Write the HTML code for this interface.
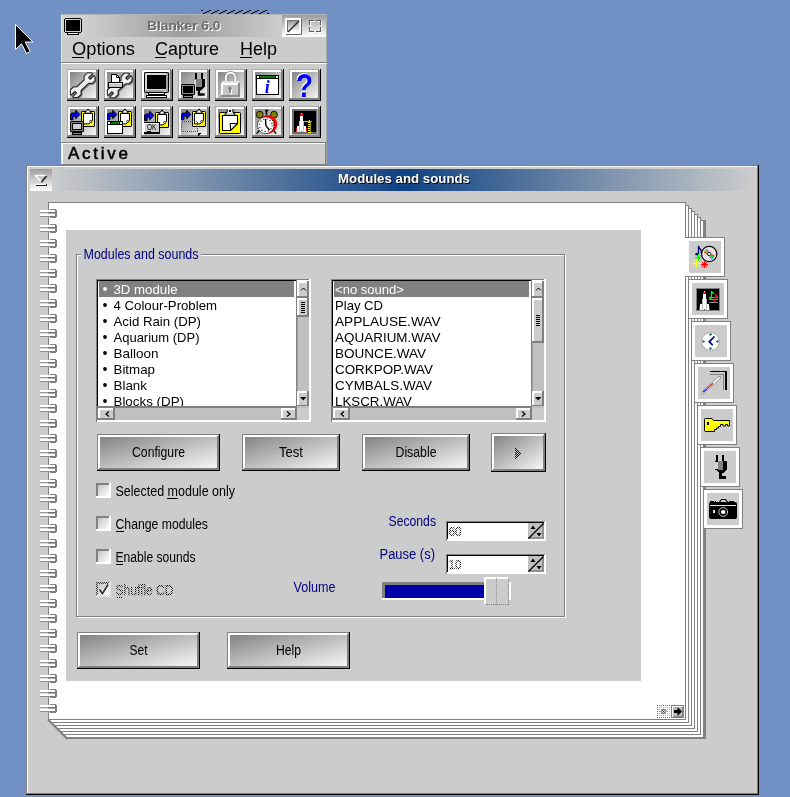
<!DOCTYPE html>
<html lang="en"><head><meta charset="utf-8"><title>Blanker 6.0 - Modules and sounds</title>
<style>
html,body{margin:0;padding:0;background:#7190c3;}
body{width:790px;height:797px;overflow:hidden;position:relative;}
svg{display:block;position:absolute;left:0;top:0;filter:drop-shadow(0 0 0 transparent);font-family:"Liberation Sans",sans-serif;}
text{white-space:pre;}
</style></head><body>
<svg width="790" height="797" viewBox="0 0 790 797" shape-rendering="crispEdges">
<defs>
<linearGradient id="gb" x1="0" y1="0" x2="1" y2="1"><stop offset="0" stop-color="#848484"/><stop offset="0.5" stop-color="#bdbdbd"/><stop offset="1" stop-color="#f6f6f6"/></linearGradient>
<linearGradient id="gt1" x1="0" y1="0" x2="1" y2="0"><stop offset="0" stop-color="#cfcfcf"/><stop offset="0.5" stop-color="#9c9c9c"/><stop offset="1" stop-color="#cdcdcd"/></linearGradient>
<linearGradient id="gt2" x1="0" y1="0" x2="1" y2="0"><stop offset="0" stop-color="#cccccc"/><stop offset="0.5" stop-color="#0e4283"/><stop offset="1" stop-color="#cccccc"/></linearGradient>
<linearGradient id="gv" x1="0" y1="0" x2="0" y2="1"><stop offset="0" stop-color="#9c9c9c"/><stop offset="1" stop-color="#ffffff"/></linearGradient>
<linearGradient id="gring" x1="0" y1="0" x2="0" y2="1"><stop offset="0" stop-color="#8a8a8a"/><stop offset="0.3" stop-color="#ffffff"/><stop offset="0.55" stop-color="#b0b0b0"/><stop offset="0.75" stop-color="#f4f4f4"/><stop offset="1" stop-color="#808080"/></linearGradient>
<pattern id="chk" width="2" height="2" patternUnits="userSpaceOnUse"><rect width="2" height="2" fill="#fff"/><rect width="1" height="1" fill="#999"/><rect x="1" y="1" width="1" height="1" fill="#999"/></pattern>
<pattern id="dith" width="2" height="2" patternUnits="userSpaceOnUse"><rect width="2" height="2" fill="#fff"/><rect width="1" height="1" fill="#aaa"/><rect x="1" y="1" width="1" height="1" fill="#aaa"/></pattern>
<linearGradient id="gclip" x1="0" y1="0" x2="0" y2="1"><stop offset="0" stop-color="#ffffff"/><stop offset="0.6" stop-color="#f0f0f0"/><stop offset="1" stop-color="#909090"/></linearGradient>
<clipPath id="c1"><rect x="98" y="281" width="198" height="125"/></clipPath>
<clipPath id="c2"><rect x="333" y="281" width="198" height="125"/></clipPath>
<pattern id="ht" width="2" height="2" patternUnits="userSpaceOnUse"><rect width="2" height="2" fill="#000"/><rect width="1" height="1" fill="#fff"/><rect x="1" y="1" width="1" height="1" fill="#fff"/></pattern>
<mask id="mht" maskUnits="userSpaceOnUse" x="0" y="0" width="790" height="797"><rect width="790" height="797" fill="url(#ht)"/></mask>
<linearGradient id="gc" x1="0" y1="0" x2="1" y2="1"><stop offset="0" stop-color="#c4c4c4"/><stop offset="1" stop-color="#ffffff"/></linearGradient>
<pattern id="chk2" width="2" height="2" patternUnits="userSpaceOnUse"><rect width="2" height="2" fill="#fff"/><rect x="1" y="1" width="1" height="1" fill="#a8a8a8"/></pattern>
</defs>
<rect x="0" y="0" width="790" height="797" fill="#7190c3"/>
<path d="M15.5,24.5 L15.5,49.5 L21.5,43.8 L26.6,53.5 L30.2,51.6 L25.2,42 L33,42 Z" fill="#000000" stroke="#ffffff" stroke-width="1" shape-rendering="geometricPrecision" stroke-linejoin="miter"/>
<rect x="201" y="10" width="2" height="1" fill="#000000"/>
<rect x="203" y="13" width="2" height="1" fill="#000000"/>
<rect x="205" y="12" width="2" height="1" fill="#000000"/>
<rect x="207" y="11" width="2" height="1" fill="#000000"/>
<rect x="209" y="10" width="2" height="1" fill="#000000"/>
<rect x="211" y="13" width="2" height="1" fill="#000000"/>
<rect x="213" y="12" width="2" height="1" fill="#000000"/>
<rect x="215" y="11" width="2" height="1" fill="#000000"/>
<rect x="217" y="10" width="2" height="1" fill="#000000"/>
<rect x="219" y="13" width="2" height="1" fill="#000000"/>
<rect x="221" y="12" width="2" height="1" fill="#000000"/>
<rect x="223" y="11" width="2" height="1" fill="#000000"/>
<rect x="225" y="10" width="2" height="1" fill="#000000"/>
<rect x="227" y="13" width="2" height="1" fill="#000000"/>
<rect x="229" y="12" width="2" height="1" fill="#000000"/>
<rect x="231" y="11" width="2" height="1" fill="#000000"/>
<rect x="233" y="10" width="2" height="1" fill="#000000"/>
<rect x="235" y="13" width="2" height="1" fill="#000000"/>
<rect x="237" y="12" width="2" height="1" fill="#000000"/>
<rect x="239" y="11" width="2" height="1" fill="#000000"/>
<rect x="241" y="10" width="2" height="1" fill="#000000"/>
<rect x="243" y="13" width="2" height="1" fill="#000000"/>
<rect x="245" y="12" width="2" height="1" fill="#000000"/>
<rect x="247" y="11" width="2" height="1" fill="#000000"/>
<rect x="249" y="10" width="2" height="1" fill="#000000"/>
<rect x="251" y="13" width="2" height="1" fill="#000000"/>
<rect x="253" y="12" width="2" height="1" fill="#000000"/>
<rect x="255" y="11" width="2" height="1" fill="#000000"/>
<rect x="257" y="10" width="2" height="1" fill="#000000"/>
<rect x="259" y="13" width="2" height="1" fill="#000000"/>
<rect x="261" y="12" width="2" height="1" fill="#000000"/>
<rect x="263" y="11" width="2" height="1" fill="#000000"/>
<rect x="265" y="10" width="2" height="1" fill="#000000"/>
<rect x="267" y="13" width="2" height="1" fill="#000000"/>
<rect x="61" y="14" width="266" height="151" fill="#cccccc"/>
<rect x="61" y="14" width="1" height="151" fill="#e8e8e8"/>
<rect x="61" y="14" width="266" height="1" fill="#b4b4b4"/>
<rect x="326" y="14" width="1" height="151" fill="#a8a8a8"/>
<rect x="62" y="15" width="22" height="22" fill="#d2d2d2"/>
<rect x="84" y="15" width="198" height="22" fill="url(#gt1)"/>
<rect x="282" y="15" width="44" height="22" fill="url(#gv)"/>
<text x="148" y="30.6" font-size="13.3" fill="#ffffff" font-weight="700" textLength="73.5" lengthAdjust="spacingAndGlyphs">Blanker 6.0</text>
<text x="147" y="29.6" font-size="13.3" fill="#6c6c6c" font-weight="700" textLength="73.5" lengthAdjust="spacingAndGlyphs">Blanker 6.0</text>
<text x="72" y="55" font-size="18" fill="#000000" textLength="63" lengthAdjust="spacingAndGlyphs">Options</text>
<text x="155" y="55" font-size="18" fill="#000000" textLength="64" lengthAdjust="spacingAndGlyphs">Capture</text>
<text x="240" y="55" font-size="18" fill="#000000" textLength="37" lengthAdjust="spacingAndGlyphs">Help</text>
<rect x="72" y="57" width="12" height="1" fill="#000000"/>
<rect x="155" y="57" width="11" height="1" fill="#000000"/>
<rect x="240" y="57" width="12" height="1" fill="#000000"/>
<rect x="61" y="62" width="266" height="1" fill="#808080"/>
<rect x="61" y="63" width="266" height="1" fill="#ffffff"/>
<rect x="61" y="142" width="266" height="1" fill="#808080"/>
<rect x="61" y="143" width="265" height="1" fill="#ffffff"/>
<rect x="62" y="143" width="1" height="21" fill="#ffffff"/>
<rect x="325" y="143" width="1" height="22" fill="#808080"/>
<rect x="61" y="164" width="266" height="1" fill="#808080"/>
<text x="68" y="158.5" font-size="17" fill="#000000" textLength="60" lengthAdjust="spacing" stroke="#000" stroke-width="0.55">Active</text>
<rect x="67" y="69" width="32" height="32" fill="#000000"/>
<rect x="67" y="69" width="31" height="31" fill="#808080"/>
<rect x="67" y="69" width="29" height="29" fill="#ffffff"/>
<rect x="67" y="69" width="1" height="29" fill="#aaaaaa"/>
<rect x="67" y="69" width="29" height="1" fill="#aaaaaa"/>
<rect x="70" y="72" width="26" height="26" fill="url(#gb)"/>
<path d="M96,70 l2,0 l0,-1 Z" fill="#ffffff"/>
<rect x="104" y="69" width="32" height="32" fill="#000000"/>
<rect x="104" y="69" width="31" height="31" fill="#808080"/>
<rect x="104" y="69" width="29" height="29" fill="#ffffff"/>
<rect x="104" y="69" width="1" height="29" fill="#aaaaaa"/>
<rect x="104" y="69" width="29" height="1" fill="#aaaaaa"/>
<rect x="107" y="72" width="26" height="26" fill="url(#gb)"/>
<path d="M133,70 l2,0 l0,-1 Z" fill="#ffffff"/>
<rect x="141" y="69" width="32" height="32" fill="#000000"/>
<rect x="141" y="69" width="31" height="31" fill="#808080"/>
<rect x="141" y="69" width="29" height="29" fill="#ffffff"/>
<rect x="141" y="69" width="1" height="29" fill="#aaaaaa"/>
<rect x="141" y="69" width="29" height="1" fill="#aaaaaa"/>
<rect x="144" y="72" width="26" height="26" fill="url(#gb)"/>
<path d="M170,70 l2,0 l0,-1 Z" fill="#ffffff"/>
<rect x="178" y="69" width="32" height="32" fill="#000000"/>
<rect x="178" y="69" width="31" height="31" fill="#808080"/>
<rect x="178" y="69" width="29" height="29" fill="#ffffff"/>
<rect x="178" y="69" width="1" height="29" fill="#aaaaaa"/>
<rect x="178" y="69" width="29" height="1" fill="#aaaaaa"/>
<rect x="181" y="72" width="26" height="26" fill="url(#gb)"/>
<path d="M207,70 l2,0 l0,-1 Z" fill="#ffffff"/>
<rect x="215" y="69" width="32" height="32" fill="#000000"/>
<rect x="215" y="69" width="31" height="31" fill="#808080"/>
<rect x="215" y="69" width="29" height="29" fill="#ffffff"/>
<rect x="215" y="69" width="1" height="29" fill="#aaaaaa"/>
<rect x="215" y="69" width="29" height="1" fill="#aaaaaa"/>
<rect x="218" y="72" width="26" height="26" fill="url(#gb)"/>
<path d="M244,70 l2,0 l0,-1 Z" fill="#ffffff"/>
<rect x="252" y="69" width="32" height="32" fill="#000000"/>
<rect x="252" y="69" width="31" height="31" fill="#808080"/>
<rect x="252" y="69" width="29" height="29" fill="#ffffff"/>
<rect x="252" y="69" width="1" height="29" fill="#aaaaaa"/>
<rect x="252" y="69" width="29" height="1" fill="#aaaaaa"/>
<rect x="255" y="72" width="26" height="26" fill="url(#gb)"/>
<path d="M281,70 l2,0 l0,-1 Z" fill="#ffffff"/>
<rect x="289" y="69" width="32" height="32" fill="#000000"/>
<rect x="289" y="69" width="31" height="31" fill="#808080"/>
<rect x="289" y="69" width="29" height="29" fill="#ffffff"/>
<rect x="289" y="69" width="1" height="29" fill="#aaaaaa"/>
<rect x="289" y="69" width="29" height="1" fill="#aaaaaa"/>
<rect x="292" y="72" width="26" height="26" fill="url(#gb)"/>
<path d="M318,70 l2,0 l0,-1 Z" fill="#ffffff"/>
<rect x="67" y="106" width="32" height="32" fill="#000000"/>
<rect x="67" y="106" width="31" height="31" fill="#808080"/>
<rect x="67" y="106" width="29" height="29" fill="#ffffff"/>
<rect x="67" y="106" width="1" height="29" fill="#aaaaaa"/>
<rect x="67" y="106" width="29" height="1" fill="#aaaaaa"/>
<rect x="70" y="109" width="26" height="26" fill="url(#gb)"/>
<path d="M96,107 l2,0 l0,-1 Z" fill="#ffffff"/>
<rect x="104" y="106" width="32" height="32" fill="#000000"/>
<rect x="104" y="106" width="31" height="31" fill="#808080"/>
<rect x="104" y="106" width="29" height="29" fill="#ffffff"/>
<rect x="104" y="106" width="1" height="29" fill="#aaaaaa"/>
<rect x="104" y="106" width="29" height="1" fill="#aaaaaa"/>
<rect x="107" y="109" width="26" height="26" fill="url(#gb)"/>
<path d="M133,107 l2,0 l0,-1 Z" fill="#ffffff"/>
<rect x="141" y="106" width="32" height="32" fill="#000000"/>
<rect x="141" y="106" width="31" height="31" fill="#808080"/>
<rect x="141" y="106" width="29" height="29" fill="#ffffff"/>
<rect x="141" y="106" width="1" height="29" fill="#aaaaaa"/>
<rect x="141" y="106" width="29" height="1" fill="#aaaaaa"/>
<rect x="144" y="109" width="26" height="26" fill="url(#gb)"/>
<path d="M170,107 l2,0 l0,-1 Z" fill="#ffffff"/>
<rect x="178" y="106" width="32" height="32" fill="#000000"/>
<rect x="178" y="106" width="31" height="31" fill="#808080"/>
<rect x="178" y="106" width="29" height="29" fill="#ffffff"/>
<rect x="178" y="106" width="1" height="29" fill="#aaaaaa"/>
<rect x="178" y="106" width="29" height="1" fill="#aaaaaa"/>
<rect x="181" y="109" width="26" height="26" fill="url(#gb)"/>
<path d="M207,107 l2,0 l0,-1 Z" fill="#ffffff"/>
<rect x="215" y="106" width="32" height="32" fill="#000000"/>
<rect x="215" y="106" width="31" height="31" fill="#808080"/>
<rect x="215" y="106" width="29" height="29" fill="#ffffff"/>
<rect x="215" y="106" width="1" height="29" fill="#aaaaaa"/>
<rect x="215" y="106" width="29" height="1" fill="#aaaaaa"/>
<rect x="218" y="109" width="26" height="26" fill="url(#gb)"/>
<path d="M244,107 l2,0 l0,-1 Z" fill="#ffffff"/>
<rect x="252" y="106" width="32" height="32" fill="#000000"/>
<rect x="252" y="106" width="31" height="31" fill="#808080"/>
<rect x="252" y="106" width="29" height="29" fill="#ffffff"/>
<rect x="252" y="106" width="1" height="29" fill="#aaaaaa"/>
<rect x="252" y="106" width="29" height="1" fill="#aaaaaa"/>
<rect x="255" y="109" width="26" height="26" fill="url(#gb)"/>
<path d="M281,107 l2,0 l0,-1 Z" fill="#ffffff"/>
<rect x="289" y="106" width="32" height="32" fill="#000000"/>
<rect x="289" y="106" width="31" height="31" fill="#808080"/>
<rect x="289" y="106" width="29" height="29" fill="#ffffff"/>
<rect x="289" y="106" width="1" height="29" fill="#aaaaaa"/>
<rect x="289" y="106" width="29" height="1" fill="#aaaaaa"/>
<rect x="292" y="109" width="26" height="26" fill="url(#gb)"/>
<path d="M318,107 l2,0 l0,-1 Z" fill="#ffffff"/>
<rect x="26" y="165" width="733" height="630" fill="#cccccc"/>
<rect x="26" y="165" width="1" height="630" fill="#808080"/>
<rect x="26" y="165" width="733" height="1" fill="#808080"/>
<rect x="27" y="166" width="1" height="628" fill="#ffffff"/>
<rect x="27" y="166" width="731" height="1" fill="#ffffff"/>
<rect x="757" y="166" width="1" height="629" fill="#808080"/>
<rect x="27" y="793" width="732" height="1" fill="#808080"/>
<rect x="758" y="165" width="1" height="630" fill="#000000"/>
<rect x="26" y="794" width="733" height="1" fill="#000000"/>
<rect x="30" y="169" width="22" height="22" fill="url(#gv)"/>
<rect x="52" y="169" width="702" height="22" fill="url(#gt2)"/>
<text x="339" y="184" font-size="13" fill="#000000" font-weight="700" textLength="132" lengthAdjust="spacingAndGlyphs">Modules and sounds</text>
<text x="338" y="183" font-size="13" fill="#ffffff" font-weight="700" textLength="132" lengthAdjust="spacingAndGlyphs">Modules and sounds</text>
<rect x="48" y="220" width="658" height="519" fill="#808080"/>
<rect x="49" y="221" width="654" height="516" fill="#ffffff"/>
<rect x="48" y="217" width="653" height="518" fill="#808080"/>
<rect x="49" y="218" width="651" height="516" fill="#ffffff"/>
<rect x="48" y="214" width="650" height="518" fill="#808080"/>
<rect x="49" y="215" width="648" height="516" fill="#ffffff"/>
<rect x="48" y="211" width="647" height="518" fill="#808080"/>
<rect x="49" y="212" width="645" height="516" fill="#ffffff"/>
<rect x="48" y="208" width="644" height="518" fill="#808080"/>
<rect x="49" y="209" width="642" height="516" fill="#ffffff"/>
<rect x="48" y="205" width="641" height="518" fill="#808080"/>
<rect x="49" y="206" width="639" height="516" fill="#ffffff"/>
<rect x="48" y="202" width="638" height="518" fill="#808080"/>
<rect x="49" y="203" width="636" height="516" fill="#ffffff"/>
<path d="M47,720 L47,740 L67,740 Z" fill="#cccccc"/>
<path d="M48,719.5 L67.5,739" fill="none" stroke="#808080" stroke-width="2.2" shape-rendering="geometricPrecision"/>
<rect x="66" y="230" width="575" height="451" fill="#cccccc"/>
<rect x="50" y="209" width="6" height="9" fill="#808080"/>
<rect x="55" y="210" width="2" height="7" fill="#808080"/>
<rect x="40" y="210" width="15" height="2" fill="#ffffff"/>
<rect x="40" y="212" width="8" height="1" fill="#9a9a9a"/>
<rect x="48" y="212" width="7" height="1" fill="#727272"/>
<rect x="40" y="213" width="8" height="1" fill="#dcdcdc"/>
<rect x="48" y="213" width="7" height="1" fill="#a8a8a8"/>
<rect x="40" y="214" width="15" height="2" fill="#ffffff"/>
<rect x="40" y="216" width="10" height="1" fill="#8c8c8c"/>
<rect x="50" y="224" width="6" height="9" fill="#808080"/>
<rect x="55" y="225" width="2" height="7" fill="#808080"/>
<rect x="40" y="225" width="15" height="2" fill="#ffffff"/>
<rect x="40" y="227" width="8" height="1" fill="#9a9a9a"/>
<rect x="48" y="227" width="7" height="1" fill="#727272"/>
<rect x="40" y="228" width="8" height="1" fill="#dcdcdc"/>
<rect x="48" y="228" width="7" height="1" fill="#a8a8a8"/>
<rect x="40" y="229" width="15" height="2" fill="#ffffff"/>
<rect x="40" y="231" width="10" height="1" fill="#8c8c8c"/>
<rect x="50" y="239" width="6" height="9" fill="#808080"/>
<rect x="55" y="240" width="2" height="7" fill="#808080"/>
<rect x="40" y="240" width="15" height="2" fill="#ffffff"/>
<rect x="40" y="242" width="8" height="1" fill="#9a9a9a"/>
<rect x="48" y="242" width="7" height="1" fill="#727272"/>
<rect x="40" y="243" width="8" height="1" fill="#dcdcdc"/>
<rect x="48" y="243" width="7" height="1" fill="#a8a8a8"/>
<rect x="40" y="244" width="15" height="2" fill="#ffffff"/>
<rect x="40" y="246" width="10" height="1" fill="#8c8c8c"/>
<rect x="50" y="254" width="6" height="9" fill="#808080"/>
<rect x="55" y="255" width="2" height="7" fill="#808080"/>
<rect x="40" y="255" width="15" height="2" fill="#ffffff"/>
<rect x="40" y="257" width="8" height="1" fill="#9a9a9a"/>
<rect x="48" y="257" width="7" height="1" fill="#727272"/>
<rect x="40" y="258" width="8" height="1" fill="#dcdcdc"/>
<rect x="48" y="258" width="7" height="1" fill="#a8a8a8"/>
<rect x="40" y="259" width="15" height="2" fill="#ffffff"/>
<rect x="40" y="261" width="10" height="1" fill="#8c8c8c"/>
<rect x="50" y="269" width="6" height="9" fill="#808080"/>
<rect x="55" y="270" width="2" height="7" fill="#808080"/>
<rect x="40" y="270" width="15" height="2" fill="#ffffff"/>
<rect x="40" y="272" width="8" height="1" fill="#9a9a9a"/>
<rect x="48" y="272" width="7" height="1" fill="#727272"/>
<rect x="40" y="273" width="8" height="1" fill="#dcdcdc"/>
<rect x="48" y="273" width="7" height="1" fill="#a8a8a8"/>
<rect x="40" y="274" width="15" height="2" fill="#ffffff"/>
<rect x="40" y="276" width="10" height="1" fill="#8c8c8c"/>
<rect x="50" y="284" width="6" height="9" fill="#808080"/>
<rect x="55" y="285" width="2" height="7" fill="#808080"/>
<rect x="40" y="285" width="15" height="2" fill="#ffffff"/>
<rect x="40" y="287" width="8" height="1" fill="#9a9a9a"/>
<rect x="48" y="287" width="7" height="1" fill="#727272"/>
<rect x="40" y="288" width="8" height="1" fill="#dcdcdc"/>
<rect x="48" y="288" width="7" height="1" fill="#a8a8a8"/>
<rect x="40" y="289" width="15" height="2" fill="#ffffff"/>
<rect x="40" y="291" width="10" height="1" fill="#8c8c8c"/>
<rect x="50" y="299" width="6" height="9" fill="#808080"/>
<rect x="55" y="300" width="2" height="7" fill="#808080"/>
<rect x="40" y="300" width="15" height="2" fill="#ffffff"/>
<rect x="40" y="302" width="8" height="1" fill="#9a9a9a"/>
<rect x="48" y="302" width="7" height="1" fill="#727272"/>
<rect x="40" y="303" width="8" height="1" fill="#dcdcdc"/>
<rect x="48" y="303" width="7" height="1" fill="#a8a8a8"/>
<rect x="40" y="304" width="15" height="2" fill="#ffffff"/>
<rect x="40" y="306" width="10" height="1" fill="#8c8c8c"/>
<rect x="50" y="314" width="6" height="9" fill="#808080"/>
<rect x="55" y="315" width="2" height="7" fill="#808080"/>
<rect x="40" y="315" width="15" height="2" fill="#ffffff"/>
<rect x="40" y="317" width="8" height="1" fill="#9a9a9a"/>
<rect x="48" y="317" width="7" height="1" fill="#727272"/>
<rect x="40" y="318" width="8" height="1" fill="#dcdcdc"/>
<rect x="48" y="318" width="7" height="1" fill="#a8a8a8"/>
<rect x="40" y="319" width="15" height="2" fill="#ffffff"/>
<rect x="40" y="321" width="10" height="1" fill="#8c8c8c"/>
<rect x="50" y="329" width="6" height="9" fill="#808080"/>
<rect x="55" y="330" width="2" height="7" fill="#808080"/>
<rect x="40" y="330" width="15" height="2" fill="#ffffff"/>
<rect x="40" y="332" width="8" height="1" fill="#9a9a9a"/>
<rect x="48" y="332" width="7" height="1" fill="#727272"/>
<rect x="40" y="333" width="8" height="1" fill="#dcdcdc"/>
<rect x="48" y="333" width="7" height="1" fill="#a8a8a8"/>
<rect x="40" y="334" width="15" height="2" fill="#ffffff"/>
<rect x="40" y="336" width="10" height="1" fill="#8c8c8c"/>
<rect x="50" y="344" width="6" height="9" fill="#808080"/>
<rect x="55" y="345" width="2" height="7" fill="#808080"/>
<rect x="40" y="345" width="15" height="2" fill="#ffffff"/>
<rect x="40" y="347" width="8" height="1" fill="#9a9a9a"/>
<rect x="48" y="347" width="7" height="1" fill="#727272"/>
<rect x="40" y="348" width="8" height="1" fill="#dcdcdc"/>
<rect x="48" y="348" width="7" height="1" fill="#a8a8a8"/>
<rect x="40" y="349" width="15" height="2" fill="#ffffff"/>
<rect x="40" y="351" width="10" height="1" fill="#8c8c8c"/>
<rect x="50" y="359" width="6" height="9" fill="#808080"/>
<rect x="55" y="360" width="2" height="7" fill="#808080"/>
<rect x="40" y="360" width="15" height="2" fill="#ffffff"/>
<rect x="40" y="362" width="8" height="1" fill="#9a9a9a"/>
<rect x="48" y="362" width="7" height="1" fill="#727272"/>
<rect x="40" y="363" width="8" height="1" fill="#dcdcdc"/>
<rect x="48" y="363" width="7" height="1" fill="#a8a8a8"/>
<rect x="40" y="364" width="15" height="2" fill="#ffffff"/>
<rect x="40" y="366" width="10" height="1" fill="#8c8c8c"/>
<rect x="50" y="374" width="6" height="9" fill="#808080"/>
<rect x="55" y="375" width="2" height="7" fill="#808080"/>
<rect x="40" y="375" width="15" height="2" fill="#ffffff"/>
<rect x="40" y="377" width="8" height="1" fill="#9a9a9a"/>
<rect x="48" y="377" width="7" height="1" fill="#727272"/>
<rect x="40" y="378" width="8" height="1" fill="#dcdcdc"/>
<rect x="48" y="378" width="7" height="1" fill="#a8a8a8"/>
<rect x="40" y="379" width="15" height="2" fill="#ffffff"/>
<rect x="40" y="381" width="10" height="1" fill="#8c8c8c"/>
<rect x="50" y="389" width="6" height="9" fill="#808080"/>
<rect x="55" y="390" width="2" height="7" fill="#808080"/>
<rect x="40" y="390" width="15" height="2" fill="#ffffff"/>
<rect x="40" y="392" width="8" height="1" fill="#9a9a9a"/>
<rect x="48" y="392" width="7" height="1" fill="#727272"/>
<rect x="40" y="393" width="8" height="1" fill="#dcdcdc"/>
<rect x="48" y="393" width="7" height="1" fill="#a8a8a8"/>
<rect x="40" y="394" width="15" height="2" fill="#ffffff"/>
<rect x="40" y="396" width="10" height="1" fill="#8c8c8c"/>
<rect x="50" y="404" width="6" height="9" fill="#808080"/>
<rect x="55" y="405" width="2" height="7" fill="#808080"/>
<rect x="40" y="405" width="15" height="2" fill="#ffffff"/>
<rect x="40" y="407" width="8" height="1" fill="#9a9a9a"/>
<rect x="48" y="407" width="7" height="1" fill="#727272"/>
<rect x="40" y="408" width="8" height="1" fill="#dcdcdc"/>
<rect x="48" y="408" width="7" height="1" fill="#a8a8a8"/>
<rect x="40" y="409" width="15" height="2" fill="#ffffff"/>
<rect x="40" y="411" width="10" height="1" fill="#8c8c8c"/>
<rect x="50" y="419" width="6" height="9" fill="#808080"/>
<rect x="55" y="420" width="2" height="7" fill="#808080"/>
<rect x="40" y="420" width="15" height="2" fill="#ffffff"/>
<rect x="40" y="422" width="8" height="1" fill="#9a9a9a"/>
<rect x="48" y="422" width="7" height="1" fill="#727272"/>
<rect x="40" y="423" width="8" height="1" fill="#dcdcdc"/>
<rect x="48" y="423" width="7" height="1" fill="#a8a8a8"/>
<rect x="40" y="424" width="15" height="2" fill="#ffffff"/>
<rect x="40" y="426" width="10" height="1" fill="#8c8c8c"/>
<rect x="50" y="434" width="6" height="9" fill="#808080"/>
<rect x="55" y="435" width="2" height="7" fill="#808080"/>
<rect x="40" y="435" width="15" height="2" fill="#ffffff"/>
<rect x="40" y="437" width="8" height="1" fill="#9a9a9a"/>
<rect x="48" y="437" width="7" height="1" fill="#727272"/>
<rect x="40" y="438" width="8" height="1" fill="#dcdcdc"/>
<rect x="48" y="438" width="7" height="1" fill="#a8a8a8"/>
<rect x="40" y="439" width="15" height="2" fill="#ffffff"/>
<rect x="40" y="441" width="10" height="1" fill="#8c8c8c"/>
<rect x="50" y="449" width="6" height="9" fill="#808080"/>
<rect x="55" y="450" width="2" height="7" fill="#808080"/>
<rect x="40" y="450" width="15" height="2" fill="#ffffff"/>
<rect x="40" y="452" width="8" height="1" fill="#9a9a9a"/>
<rect x="48" y="452" width="7" height="1" fill="#727272"/>
<rect x="40" y="453" width="8" height="1" fill="#dcdcdc"/>
<rect x="48" y="453" width="7" height="1" fill="#a8a8a8"/>
<rect x="40" y="454" width="15" height="2" fill="#ffffff"/>
<rect x="40" y="456" width="10" height="1" fill="#8c8c8c"/>
<rect x="50" y="464" width="6" height="9" fill="#808080"/>
<rect x="55" y="465" width="2" height="7" fill="#808080"/>
<rect x="40" y="465" width="15" height="2" fill="#ffffff"/>
<rect x="40" y="467" width="8" height="1" fill="#9a9a9a"/>
<rect x="48" y="467" width="7" height="1" fill="#727272"/>
<rect x="40" y="468" width="8" height="1" fill="#dcdcdc"/>
<rect x="48" y="468" width="7" height="1" fill="#a8a8a8"/>
<rect x="40" y="469" width="15" height="2" fill="#ffffff"/>
<rect x="40" y="471" width="10" height="1" fill="#8c8c8c"/>
<rect x="50" y="479" width="6" height="9" fill="#808080"/>
<rect x="55" y="480" width="2" height="7" fill="#808080"/>
<rect x="40" y="480" width="15" height="2" fill="#ffffff"/>
<rect x="40" y="482" width="8" height="1" fill="#9a9a9a"/>
<rect x="48" y="482" width="7" height="1" fill="#727272"/>
<rect x="40" y="483" width="8" height="1" fill="#dcdcdc"/>
<rect x="48" y="483" width="7" height="1" fill="#a8a8a8"/>
<rect x="40" y="484" width="15" height="2" fill="#ffffff"/>
<rect x="40" y="486" width="10" height="1" fill="#8c8c8c"/>
<rect x="50" y="494" width="6" height="9" fill="#808080"/>
<rect x="55" y="495" width="2" height="7" fill="#808080"/>
<rect x="40" y="495" width="15" height="2" fill="#ffffff"/>
<rect x="40" y="497" width="8" height="1" fill="#9a9a9a"/>
<rect x="48" y="497" width="7" height="1" fill="#727272"/>
<rect x="40" y="498" width="8" height="1" fill="#dcdcdc"/>
<rect x="48" y="498" width="7" height="1" fill="#a8a8a8"/>
<rect x="40" y="499" width="15" height="2" fill="#ffffff"/>
<rect x="40" y="501" width="10" height="1" fill="#8c8c8c"/>
<rect x="50" y="509" width="6" height="9" fill="#808080"/>
<rect x="55" y="510" width="2" height="7" fill="#808080"/>
<rect x="40" y="510" width="15" height="2" fill="#ffffff"/>
<rect x="40" y="512" width="8" height="1" fill="#9a9a9a"/>
<rect x="48" y="512" width="7" height="1" fill="#727272"/>
<rect x="40" y="513" width="8" height="1" fill="#dcdcdc"/>
<rect x="48" y="513" width="7" height="1" fill="#a8a8a8"/>
<rect x="40" y="514" width="15" height="2" fill="#ffffff"/>
<rect x="40" y="516" width="10" height="1" fill="#8c8c8c"/>
<rect x="50" y="524" width="6" height="9" fill="#808080"/>
<rect x="55" y="525" width="2" height="7" fill="#808080"/>
<rect x="40" y="525" width="15" height="2" fill="#ffffff"/>
<rect x="40" y="527" width="8" height="1" fill="#9a9a9a"/>
<rect x="48" y="527" width="7" height="1" fill="#727272"/>
<rect x="40" y="528" width="8" height="1" fill="#dcdcdc"/>
<rect x="48" y="528" width="7" height="1" fill="#a8a8a8"/>
<rect x="40" y="529" width="15" height="2" fill="#ffffff"/>
<rect x="40" y="531" width="10" height="1" fill="#8c8c8c"/>
<rect x="50" y="539" width="6" height="9" fill="#808080"/>
<rect x="55" y="540" width="2" height="7" fill="#808080"/>
<rect x="40" y="540" width="15" height="2" fill="#ffffff"/>
<rect x="40" y="542" width="8" height="1" fill="#9a9a9a"/>
<rect x="48" y="542" width="7" height="1" fill="#727272"/>
<rect x="40" y="543" width="8" height="1" fill="#dcdcdc"/>
<rect x="48" y="543" width="7" height="1" fill="#a8a8a8"/>
<rect x="40" y="544" width="15" height="2" fill="#ffffff"/>
<rect x="40" y="546" width="10" height="1" fill="#8c8c8c"/>
<rect x="50" y="554" width="6" height="9" fill="#808080"/>
<rect x="55" y="555" width="2" height="7" fill="#808080"/>
<rect x="40" y="555" width="15" height="2" fill="#ffffff"/>
<rect x="40" y="557" width="8" height="1" fill="#9a9a9a"/>
<rect x="48" y="557" width="7" height="1" fill="#727272"/>
<rect x="40" y="558" width="8" height="1" fill="#dcdcdc"/>
<rect x="48" y="558" width="7" height="1" fill="#a8a8a8"/>
<rect x="40" y="559" width="15" height="2" fill="#ffffff"/>
<rect x="40" y="561" width="10" height="1" fill="#8c8c8c"/>
<rect x="50" y="569" width="6" height="9" fill="#808080"/>
<rect x="55" y="570" width="2" height="7" fill="#808080"/>
<rect x="40" y="570" width="15" height="2" fill="#ffffff"/>
<rect x="40" y="572" width="8" height="1" fill="#9a9a9a"/>
<rect x="48" y="572" width="7" height="1" fill="#727272"/>
<rect x="40" y="573" width="8" height="1" fill="#dcdcdc"/>
<rect x="48" y="573" width="7" height="1" fill="#a8a8a8"/>
<rect x="40" y="574" width="15" height="2" fill="#ffffff"/>
<rect x="40" y="576" width="10" height="1" fill="#8c8c8c"/>
<rect x="50" y="584" width="6" height="9" fill="#808080"/>
<rect x="55" y="585" width="2" height="7" fill="#808080"/>
<rect x="40" y="585" width="15" height="2" fill="#ffffff"/>
<rect x="40" y="587" width="8" height="1" fill="#9a9a9a"/>
<rect x="48" y="587" width="7" height="1" fill="#727272"/>
<rect x="40" y="588" width="8" height="1" fill="#dcdcdc"/>
<rect x="48" y="588" width="7" height="1" fill="#a8a8a8"/>
<rect x="40" y="589" width="15" height="2" fill="#ffffff"/>
<rect x="40" y="591" width="10" height="1" fill="#8c8c8c"/>
<rect x="50" y="599" width="6" height="9" fill="#808080"/>
<rect x="55" y="600" width="2" height="7" fill="#808080"/>
<rect x="40" y="600" width="15" height="2" fill="#ffffff"/>
<rect x="40" y="602" width="8" height="1" fill="#9a9a9a"/>
<rect x="48" y="602" width="7" height="1" fill="#727272"/>
<rect x="40" y="603" width="8" height="1" fill="#dcdcdc"/>
<rect x="48" y="603" width="7" height="1" fill="#a8a8a8"/>
<rect x="40" y="604" width="15" height="2" fill="#ffffff"/>
<rect x="40" y="606" width="10" height="1" fill="#8c8c8c"/>
<rect x="50" y="614" width="6" height="9" fill="#808080"/>
<rect x="55" y="615" width="2" height="7" fill="#808080"/>
<rect x="40" y="615" width="15" height="2" fill="#ffffff"/>
<rect x="40" y="617" width="8" height="1" fill="#9a9a9a"/>
<rect x="48" y="617" width="7" height="1" fill="#727272"/>
<rect x="40" y="618" width="8" height="1" fill="#dcdcdc"/>
<rect x="48" y="618" width="7" height="1" fill="#a8a8a8"/>
<rect x="40" y="619" width="15" height="2" fill="#ffffff"/>
<rect x="40" y="621" width="10" height="1" fill="#8c8c8c"/>
<rect x="50" y="629" width="6" height="9" fill="#808080"/>
<rect x="55" y="630" width="2" height="7" fill="#808080"/>
<rect x="40" y="630" width="15" height="2" fill="#ffffff"/>
<rect x="40" y="632" width="8" height="1" fill="#9a9a9a"/>
<rect x="48" y="632" width="7" height="1" fill="#727272"/>
<rect x="40" y="633" width="8" height="1" fill="#dcdcdc"/>
<rect x="48" y="633" width="7" height="1" fill="#a8a8a8"/>
<rect x="40" y="634" width="15" height="2" fill="#ffffff"/>
<rect x="40" y="636" width="10" height="1" fill="#8c8c8c"/>
<rect x="50" y="644" width="6" height="9" fill="#808080"/>
<rect x="55" y="645" width="2" height="7" fill="#808080"/>
<rect x="40" y="645" width="15" height="2" fill="#ffffff"/>
<rect x="40" y="647" width="8" height="1" fill="#9a9a9a"/>
<rect x="48" y="647" width="7" height="1" fill="#727272"/>
<rect x="40" y="648" width="8" height="1" fill="#dcdcdc"/>
<rect x="48" y="648" width="7" height="1" fill="#a8a8a8"/>
<rect x="40" y="649" width="15" height="2" fill="#ffffff"/>
<rect x="40" y="651" width="10" height="1" fill="#8c8c8c"/>
<rect x="50" y="659" width="6" height="9" fill="#808080"/>
<rect x="55" y="660" width="2" height="7" fill="#808080"/>
<rect x="40" y="660" width="15" height="2" fill="#ffffff"/>
<rect x="40" y="662" width="8" height="1" fill="#9a9a9a"/>
<rect x="48" y="662" width="7" height="1" fill="#727272"/>
<rect x="40" y="663" width="8" height="1" fill="#dcdcdc"/>
<rect x="48" y="663" width="7" height="1" fill="#a8a8a8"/>
<rect x="40" y="664" width="15" height="2" fill="#ffffff"/>
<rect x="40" y="666" width="10" height="1" fill="#8c8c8c"/>
<rect x="50" y="674" width="6" height="9" fill="#808080"/>
<rect x="55" y="675" width="2" height="7" fill="#808080"/>
<rect x="40" y="675" width="15" height="2" fill="#ffffff"/>
<rect x="40" y="677" width="8" height="1" fill="#9a9a9a"/>
<rect x="48" y="677" width="7" height="1" fill="#727272"/>
<rect x="40" y="678" width="8" height="1" fill="#dcdcdc"/>
<rect x="48" y="678" width="7" height="1" fill="#a8a8a8"/>
<rect x="40" y="679" width="15" height="2" fill="#ffffff"/>
<rect x="40" y="681" width="10" height="1" fill="#8c8c8c"/>
<rect x="50" y="689" width="6" height="9" fill="#808080"/>
<rect x="55" y="690" width="2" height="7" fill="#808080"/>
<rect x="40" y="690" width="15" height="2" fill="#ffffff"/>
<rect x="40" y="692" width="8" height="1" fill="#9a9a9a"/>
<rect x="48" y="692" width="7" height="1" fill="#727272"/>
<rect x="40" y="693" width="8" height="1" fill="#dcdcdc"/>
<rect x="48" y="693" width="7" height="1" fill="#a8a8a8"/>
<rect x="40" y="694" width="15" height="2" fill="#ffffff"/>
<rect x="40" y="696" width="10" height="1" fill="#8c8c8c"/>
<rect x="50" y="704" width="6" height="9" fill="#808080"/>
<rect x="55" y="705" width="2" height="7" fill="#808080"/>
<rect x="40" y="705" width="15" height="2" fill="#ffffff"/>
<rect x="40" y="707" width="8" height="1" fill="#9a9a9a"/>
<rect x="48" y="707" width="7" height="1" fill="#727272"/>
<rect x="40" y="708" width="8" height="1" fill="#dcdcdc"/>
<rect x="48" y="708" width="7" height="1" fill="#a8a8a8"/>
<rect x="40" y="709" width="15" height="2" fill="#ffffff"/>
<rect x="40" y="711" width="10" height="1" fill="#8c8c8c"/>
<rect x="77" y="255" width="489" height="1" fill="#ffffff"/>
<rect x="77" y="255" width="1" height="363" fill="#ffffff"/>
<rect x="77" y="617" width="489" height="1" fill="#ffffff"/>
<rect x="565" y="255" width="1" height="363" fill="#ffffff"/>
<rect x="76" y="254" width="489" height="1" fill="#808080"/>
<rect x="76" y="254" width="1" height="363" fill="#808080"/>
<rect x="76" y="616" width="489" height="1" fill="#808080"/>
<rect x="564" y="254" width="1" height="363" fill="#808080"/>
<rect x="81" y="248" width="120" height="14" fill="#cccccc"/>
<text x="83.5" y="258.5" font-size="14" fill="#000080" textLength="115" lengthAdjust="spacingAndGlyphs">Modules and sounds</text>
<rect x="97" y="434" width="123" height="37" fill="#000000"/>
<rect x="97" y="434" width="122" height="36" fill="#808080"/>
<rect x="98" y="435" width="119" height="33" fill="#ffffff"/>
<rect x="100" y="437" width="117" height="31" fill="url(#gb)"/>
<rect x="98" y="468" width="1" height="1" fill="#ffffff"/>
<rect x="217" y="435" width="1" height="1" fill="#ffffff"/>
<text x="158.5" y="456.5" font-size="14" fill="#000000" textLength="53" lengthAdjust="spacingAndGlyphs" text-anchor="middle">Configure</text>
<rect x="242" y="434" width="98" height="37" fill="#000000"/>
<rect x="242" y="434" width="97" height="36" fill="#808080"/>
<rect x="243" y="435" width="94" height="33" fill="#ffffff"/>
<rect x="245" y="437" width="92" height="31" fill="url(#gb)"/>
<rect x="243" y="468" width="1" height="1" fill="#ffffff"/>
<rect x="337" y="435" width="1" height="1" fill="#ffffff"/>
<text x="291.0" y="456.5" font-size="14" fill="#000000" textLength="24" lengthAdjust="spacingAndGlyphs" text-anchor="middle">Test</text>
<rect x="362" y="434" width="108" height="37" fill="#000000"/>
<rect x="362" y="434" width="107" height="36" fill="#808080"/>
<rect x="363" y="435" width="104" height="33" fill="#ffffff"/>
<rect x="365" y="437" width="102" height="31" fill="url(#gb)"/>
<rect x="363" y="468" width="1" height="1" fill="#ffffff"/>
<rect x="467" y="435" width="1" height="1" fill="#ffffff"/>
<text x="416.0" y="456.5" font-size="14" fill="#000000" textLength="41" lengthAdjust="spacingAndGlyphs" text-anchor="middle">Disable</text>
<rect x="491" y="433" width="55" height="39" fill="#000000"/>
<rect x="491" y="433" width="54" height="38" fill="#808080"/>
<rect x="492" y="434" width="51" height="35" fill="#ffffff"/>
<rect x="494" y="436" width="49" height="33" fill="url(#gb)"/>
<rect x="492" y="469" width="1" height="1" fill="#ffffff"/>
<rect x="543" y="434" width="1" height="1" fill="#ffffff"/>
<rect x="515" y="448" width="1" height="1" fill="#101010"/>
<rect x="516" y="449" width="1" height="1" fill="#101010"/>
<rect x="515" y="450" width="1" height="1" fill="#101010"/>
<rect x="517" y="450" width="1" height="1" fill="#101010"/>
<rect x="516" y="451" width="1" height="1" fill="#101010"/>
<rect x="518" y="451" width="1" height="1" fill="#101010"/>
<rect x="515" y="452" width="1" height="1" fill="#101010"/>
<rect x="517" y="452" width="1" height="1" fill="#101010"/>
<rect x="519" y="452" width="1" height="1" fill="#101010"/>
<rect x="516" y="453" width="1" height="1" fill="#101010"/>
<rect x="518" y="453" width="1" height="1" fill="#101010"/>
<rect x="520" y="453" width="1" height="1" fill="#101010"/>
<rect x="515" y="454" width="1" height="1" fill="#101010"/>
<rect x="517" y="454" width="1" height="1" fill="#101010"/>
<rect x="519" y="454" width="1" height="1" fill="#101010"/>
<rect x="516" y="455" width="1" height="1" fill="#101010"/>
<rect x="518" y="455" width="1" height="1" fill="#101010"/>
<rect x="515" y="456" width="1" height="1" fill="#101010"/>
<rect x="517" y="456" width="1" height="1" fill="#101010"/>
<rect x="516" y="457" width="1" height="1" fill="#101010"/>
<rect x="515" y="458" width="1" height="1" fill="#101010"/>
<rect x="77" y="632" width="123" height="37" fill="#000000"/>
<rect x="77" y="632" width="122" height="36" fill="#808080"/>
<rect x="78" y="633" width="119" height="33" fill="#ffffff"/>
<rect x="80" y="635" width="117" height="31" fill="url(#gb)"/>
<rect x="78" y="666" width="1" height="1" fill="#ffffff"/>
<rect x="197" y="633" width="1" height="1" fill="#ffffff"/>
<text x="138.5" y="654.5" font-size="14" fill="#000000" textLength="18" lengthAdjust="spacingAndGlyphs" text-anchor="middle">Set</text>
<rect x="227" y="632" width="123" height="37" fill="#000000"/>
<rect x="227" y="632" width="122" height="36" fill="#808080"/>
<rect x="228" y="633" width="119" height="33" fill="#ffffff"/>
<rect x="230" y="635" width="117" height="31" fill="url(#gb)"/>
<rect x="228" y="666" width="1" height="1" fill="#ffffff"/>
<rect x="347" y="633" width="1" height="1" fill="#ffffff"/>
<text x="288.5" y="654.5" font-size="14" fill="#000000" textLength="25" lengthAdjust="spacingAndGlyphs" text-anchor="middle">Help</text>
<rect x="96" y="279" width="215" height="143" fill="#ffffff"/>
<rect x="96" y="279" width="1" height="143" fill="#808080"/>
<rect x="96" y="279" width="213" height="1" fill="#808080"/>
<rect x="97" y="280" width="1" height="126" fill="#000000"/>
<rect x="97" y="280" width="199" height="1" fill="#000000"/>
<rect x="97" y="406" width="1" height="14" fill="#808080"/>
<rect x="296" y="281" width="13" height="126" fill="#c0c0c0"/>
<rect x="296" y="280" width="1" height="128" fill="#808080"/>
<rect x="297" y="317" width="1" height="75" fill="#a0a0a0"/>
<rect x="297" y="281" width="12" height="17" fill="#808080"/>
<rect x="297" y="281" width="10" height="15" fill="#ffffff"/>
<rect x="299" y="283" width="8" height="13" fill="#cccccc"/>
<path d="M301,290.5 l2.5,-2.5 l2.5,2.5" fill="none" stroke="#000000" stroke-width="1" shape-rendering="geometricPrecision"/>
<rect x="297" y="298" width="12" height="19" fill="#808080"/>
<rect x="297" y="298" width="10" height="17" fill="#ffffff"/>
<rect x="299" y="300" width="8" height="15" fill="#cccccc"/>
<rect x="301" y="302" width="4" height="1" fill="#000000"/>
<rect x="301" y="304" width="4" height="1" fill="#000000"/>
<rect x="301" y="306" width="4" height="1" fill="#000000"/>
<rect x="301" y="308" width="4" height="1" fill="#000000"/>
<rect x="301" y="310" width="4" height="1" fill="#000000"/>
<rect x="301" y="312" width="4" height="1" fill="#000000"/>
<rect x="297" y="391" width="12" height="16" fill="#808080"/>
<rect x="297" y="391" width="10" height="14" fill="#ffffff"/>
<rect x="299" y="393" width="8" height="12" fill="#cccccc"/>
<path d="M300,397 l6.4,0 l-3.2,3.6 Z" fill="#000000" shape-rendering="geometricPrecision"/>
<rect x="98" y="406" width="211" height="14" fill="#c0c0c0"/>
<rect x="97" y="406" width="200" height="1" fill="#808080"/>
<rect x="97" y="407" width="200" height="1" fill="#808080"/>
<rect x="98" y="408" width="17" height="12" fill="#808080"/>
<rect x="98" y="408" width="15" height="10" fill="#ffffff"/>
<rect x="100" y="410" width="13" height="8" fill="#cccccc"/>
<path d="M109,411.5 l-3,2.5 l3,2.5" fill="none" stroke="#000000" stroke-width="1.2" shape-rendering="geometricPrecision"/>
<rect x="281" y="408" width="16" height="12" fill="#808080"/>
<rect x="281" y="408" width="14" height="10" fill="#ffffff"/>
<rect x="283" y="410" width="12" height="8" fill="#cccccc"/>
<path d="M287,411.5 l3,2.5 l-3,2.5" fill="none" stroke="#000000" stroke-width="1.2" shape-rendering="geometricPrecision"/>
<rect x="297" y="408" width="12" height="12" fill="#cccccc"/>
<rect x="309" y="280" width="2" height="142" fill="#ffffff"/>
<rect x="97" y="420" width="214" height="2" fill="#ffffff"/>
<rect x="99" y="281" width="195" height="16" fill="#808080"/>
<g clip-path="url(#c1)">
<circle cx="105" cy="289" r="1.9" fill="#ffffff" shape-rendering="geometricPrecision"/>
<text x="113.5" y="294" font-size="13.5" fill="#ffffff" textLength="64" lengthAdjust="spacingAndGlyphs">3D module</text>
<circle cx="105" cy="305" r="1.9" fill="#000000" shape-rendering="geometricPrecision"/>
<text x="113.5" y="310" font-size="13.5" fill="#000000" textLength="103.5" lengthAdjust="spacingAndGlyphs">4 Colour-Problem</text>
<circle cx="105" cy="321" r="1.9" fill="#000000" shape-rendering="geometricPrecision"/>
<text x="113.5" y="326" font-size="13.5" fill="#000000" textLength="87.5" lengthAdjust="spacingAndGlyphs">Acid Rain (DP)</text>
<circle cx="105" cy="337" r="1.9" fill="#000000" shape-rendering="geometricPrecision"/>
<text x="113.5" y="342" font-size="13.5" fill="#000000" textLength="86" lengthAdjust="spacingAndGlyphs">Aquarium (DP)</text>
<circle cx="105" cy="353" r="1.9" fill="#000000" shape-rendering="geometricPrecision"/>
<text x="113.5" y="358" font-size="13.5" fill="#000000" textLength="45" lengthAdjust="spacingAndGlyphs">Balloon</text>
<circle cx="105" cy="369" r="1.9" fill="#000000" shape-rendering="geometricPrecision"/>
<text x="113.5" y="374" font-size="13.5" fill="#000000" textLength="41.5" lengthAdjust="spacingAndGlyphs">Bitmap</text>
<circle cx="105" cy="385" r="1.9" fill="#000000" shape-rendering="geometricPrecision"/>
<text x="113.5" y="390" font-size="13.5" fill="#000000" textLength="33.5" lengthAdjust="spacingAndGlyphs">Blank</text>
<circle cx="105" cy="401" r="1.9" fill="#000000" shape-rendering="geometricPrecision"/>
<text x="113.5" y="406" font-size="13.5" fill="#000000" textLength="70.5" lengthAdjust="spacingAndGlyphs">Blocks (DP)</text>
</g>
<rect x="331" y="279" width="215" height="143" fill="#ffffff"/>
<rect x="331" y="279" width="1" height="143" fill="#808080"/>
<rect x="331" y="279" width="213" height="1" fill="#808080"/>
<rect x="332" y="280" width="1" height="126" fill="#000000"/>
<rect x="332" y="280" width="199" height="1" fill="#000000"/>
<rect x="332" y="406" width="1" height="14" fill="#808080"/>
<rect x="531" y="281" width="13" height="126" fill="#c0c0c0"/>
<rect x="531" y="280" width="1" height="128" fill="#808080"/>
<rect x="532" y="317" width="1" height="75" fill="#a0a0a0"/>
<rect x="532" y="281" width="12" height="17" fill="#808080"/>
<rect x="532" y="281" width="10" height="15" fill="#ffffff"/>
<rect x="534" y="283" width="8" height="13" fill="#cccccc"/>
<path d="M536,290.5 l2.5,-2.5 l2.5,2.5" fill="none" stroke="#000000" stroke-width="1" shape-rendering="geometricPrecision"/>
<rect x="532" y="298" width="12" height="45" fill="#808080"/>
<rect x="532" y="298" width="10" height="43" fill="#ffffff"/>
<rect x="534" y="300" width="8" height="41" fill="#cccccc"/>
<rect x="536" y="315" width="4" height="1" fill="#000000"/>
<rect x="536" y="317" width="4" height="1" fill="#000000"/>
<rect x="536" y="319" width="4" height="1" fill="#000000"/>
<rect x="536" y="321" width="4" height="1" fill="#000000"/>
<rect x="536" y="323" width="4" height="1" fill="#000000"/>
<rect x="536" y="325" width="4" height="1" fill="#000000"/>
<rect x="532" y="391" width="12" height="16" fill="#808080"/>
<rect x="532" y="391" width="10" height="14" fill="#ffffff"/>
<rect x="534" y="393" width="8" height="12" fill="#cccccc"/>
<path d="M535,397 l6.4,0 l-3.2,3.6 Z" fill="#000000" shape-rendering="geometricPrecision"/>
<rect x="333" y="406" width="211" height="14" fill="#c0c0c0"/>
<rect x="332" y="406" width="200" height="1" fill="#808080"/>
<rect x="332" y="407" width="200" height="1" fill="#808080"/>
<rect x="333" y="408" width="17" height="12" fill="#808080"/>
<rect x="333" y="408" width="15" height="10" fill="#ffffff"/>
<rect x="335" y="410" width="13" height="8" fill="#cccccc"/>
<path d="M344,411.5 l-3,2.5 l3,2.5" fill="none" stroke="#000000" stroke-width="1.2" shape-rendering="geometricPrecision"/>
<rect x="516" y="408" width="16" height="12" fill="#808080"/>
<rect x="516" y="408" width="14" height="10" fill="#ffffff"/>
<rect x="518" y="410" width="12" height="8" fill="#cccccc"/>
<path d="M522,411.5 l3,2.5 l-3,2.5" fill="none" stroke="#000000" stroke-width="1.2" shape-rendering="geometricPrecision"/>
<rect x="532" y="408" width="12" height="12" fill="#cccccc"/>
<rect x="544" y="280" width="2" height="142" fill="#ffffff"/>
<rect x="332" y="420" width="214" height="2" fill="#ffffff"/>
<rect x="334" y="281" width="195" height="16" fill="#808080"/>
<g clip-path="url(#c2)">
<text x="335" y="294" font-size="13.5" fill="#ffffff" textLength="69" lengthAdjust="spacingAndGlyphs">&lt;no sound&gt;</text>
<text x="335" y="310" font-size="13.5" fill="#000000" textLength="48" lengthAdjust="spacingAndGlyphs">Play CD</text>
<text x="335" y="326" font-size="13.5" fill="#000000" textLength="105.5" lengthAdjust="spacingAndGlyphs">APPLAUSE.WAV</text>
<text x="335" y="342" font-size="13.5" fill="#000000" textLength="105.5" lengthAdjust="spacingAndGlyphs">AQUARIUM.WAV</text>
<text x="335" y="358" font-size="13.5" fill="#000000" textLength="91" lengthAdjust="spacingAndGlyphs">BOUNCE.WAV</text>
<text x="335" y="374" font-size="13.5" fill="#000000" textLength="98" lengthAdjust="spacingAndGlyphs">CORKPOP.WAV</text>
<text x="335" y="390" font-size="13.5" fill="#000000" textLength="97" lengthAdjust="spacingAndGlyphs">CYMBALS.WAV</text>
<text x="335" y="406" font-size="13.5" fill="#000000" textLength="77" lengthAdjust="spacingAndGlyphs">LKSCR.WAV</text>
</g>
<rect x="96" y="483" width="15" height="15" fill="#ffffff"/>
<rect x="96" y="483" width="13" height="13" fill="#808080"/>
<rect x="98" y="485" width="11" height="11" fill="url(#gc)"/>
<text x="115.5" y="495.6" font-size="14" fill="#000000" textLength="119.5" lengthAdjust="spacingAndGlyphs">Selected module only</text>
<rect x="167" y="498" width="11" height="1" fill="#000000"/>
<rect x="96" y="516" width="15" height="15" fill="#ffffff"/>
<rect x="96" y="516" width="13" height="13" fill="#808080"/>
<rect x="98" y="518" width="11" height="11" fill="url(#gc)"/>
<text x="115.5" y="528.6" font-size="14" fill="#000000" textLength="92.5" lengthAdjust="spacingAndGlyphs">Change modules</text>
<rect x="116" y="531" width="8" height="1" fill="#000000"/>
<rect x="96" y="549" width="15" height="15" fill="#ffffff"/>
<rect x="96" y="549" width="13" height="13" fill="#808080"/>
<rect x="98" y="551" width="11" height="11" fill="url(#gc)"/>
<text x="115.5" y="561.6" font-size="14" fill="#000000" textLength="80" lengthAdjust="spacingAndGlyphs">Enable sounds</text>
<rect x="116" y="564" width="7" height="1" fill="#000000"/>
<g mask="url(#mht)">
<rect x="96" y="582" width="15" height="15" fill="#ffffff"/>
<rect x="96" y="582" width="13" height="13" fill="#404040"/>
</g>
<rect x="98" y="584" width="11" height="11" fill="url(#gc)"/>
<path d="M99.5,589.5 l3,4 l5.5,-9" fill="none" stroke="#303030" stroke-width="1.6" shape-rendering="geometricPrecision"/>
<g mask="url(#mht)">
<text x="115.5" y="594.6" font-size="14" fill="#000000" textLength="58" lengthAdjust="spacingAndGlyphs" stroke="#000" stroke-width="0.25">Shuffle CD</text>
<rect x="116" y="597" width="7" height="1" fill="#000000"/>
</g>
<text x="388.5" y="526" font-size="14" fill="#000080" textLength="47.5" lengthAdjust="spacingAndGlyphs">Seconds</text>
<text x="379.5" y="559" font-size="14" fill="#000080" textLength="55.5" lengthAdjust="spacingAndGlyphs">Pause (s)</text>
<text x="293.5" y="592" font-size="14" fill="#000080" textLength="42" lengthAdjust="spacingAndGlyphs">Volume</text>
<rect x="446" y="521" width="100" height="20" fill="#ffffff"/>
<rect x="446" y="521" width="99" height="1" fill="#808080"/>
<rect x="446" y="521" width="1" height="20" fill="#808080"/>
<rect x="447" y="522" width="97" height="1" fill="#000000"/>
<rect x="447" y="522" width="1" height="17" fill="#000000"/>
<rect x="528" y="523" width="16" height="16" fill="#c0c0c0"/>
<rect x="542" y="523" width="2" height="16" fill="#909090"/>
<rect x="528" y="537" width="16" height="2" fill="#909090"/>
<path d="M528.5,538.5 L543.5,523.5" fill="none" stroke="#000000" stroke-width="1.2" shape-rendering="geometricPrecision"/>
<path d="M530.5,529 l5,0 l-2.5,-3.5 Z" fill="#000000" shape-rendering="geometricPrecision"/>
<path d="M536.5,533 l5,0 l-2.5,3.5 Z" fill="#000000" shape-rendering="geometricPrecision"/>
<g mask="url(#mht)">
<text x="448.5" y="535.5" font-size="13" fill="#000000" textLength="13" lengthAdjust="spacingAndGlyphs" stroke="#000" stroke-width="0.5">60</text>
</g>
<rect x="446" y="554" width="100" height="20" fill="#ffffff"/>
<rect x="446" y="554" width="99" height="1" fill="#808080"/>
<rect x="446" y="554" width="1" height="20" fill="#808080"/>
<rect x="447" y="555" width="97" height="1" fill="#000000"/>
<rect x="447" y="555" width="1" height="17" fill="#000000"/>
<rect x="528" y="556" width="16" height="16" fill="#c0c0c0"/>
<rect x="542" y="556" width="2" height="16" fill="#909090"/>
<rect x="528" y="570" width="16" height="2" fill="#909090"/>
<path d="M528.5,571.5 L543.5,556.5" fill="none" stroke="#000000" stroke-width="1.2" shape-rendering="geometricPrecision"/>
<path d="M530.5,562 l5,0 l-2.5,-3.5 Z" fill="#000000" shape-rendering="geometricPrecision"/>
<path d="M536.5,566 l5,0 l-2.5,3.5 Z" fill="#000000" shape-rendering="geometricPrecision"/>
<g mask="url(#mht)">
<text x="448.5" y="568.5" font-size="13" fill="#000000" textLength="13" lengthAdjust="spacingAndGlyphs" stroke="#000" stroke-width="0.5">10</text>
</g>
<rect x="382" y="582" width="129" height="18" fill="#ffffff"/>
<rect x="382" y="582" width="127" height="16" fill="#808080"/>
<rect x="385" y="585" width="124" height="13" fill="#0000aa"/>
<rect x="484" y="577" width="25" height="28" fill="#cccccc"/>
<rect x="484" y="577" width="25" height="2" fill="#ffffff"/>
<rect x="484" y="577" width="2" height="28" fill="#ffffff"/>
<rect x="508" y="578" width="1" height="1" fill="#808080"/>
<rect x="496" y="578" width="1" height="1" fill="#909090"/>
<rect x="508" y="580" width="1" height="1" fill="#808080"/>
<rect x="496" y="580" width="1" height="1" fill="#909090"/>
<rect x="508" y="582" width="1" height="1" fill="#808080"/>
<rect x="496" y="582" width="1" height="1" fill="#909090"/>
<rect x="508" y="584" width="1" height="1" fill="#808080"/>
<rect x="496" y="584" width="1" height="1" fill="#909090"/>
<rect x="508" y="586" width="1" height="1" fill="#808080"/>
<rect x="496" y="586" width="1" height="1" fill="#909090"/>
<rect x="508" y="588" width="1" height="1" fill="#808080"/>
<rect x="496" y="588" width="1" height="1" fill="#909090"/>
<rect x="508" y="590" width="1" height="1" fill="#808080"/>
<rect x="496" y="590" width="1" height="1" fill="#909090"/>
<rect x="508" y="592" width="1" height="1" fill="#808080"/>
<rect x="496" y="592" width="1" height="1" fill="#909090"/>
<rect x="508" y="594" width="1" height="1" fill="#808080"/>
<rect x="496" y="594" width="1" height="1" fill="#909090"/>
<rect x="508" y="596" width="1" height="1" fill="#808080"/>
<rect x="496" y="596" width="1" height="1" fill="#909090"/>
<rect x="508" y="598" width="1" height="1" fill="#808080"/>
<rect x="496" y="598" width="1" height="1" fill="#909090"/>
<rect x="508" y="600" width="1" height="1" fill="#808080"/>
<rect x="496" y="600" width="1" height="1" fill="#909090"/>
<rect x="508" y="602" width="1" height="1" fill="#808080"/>
<rect x="496" y="602" width="1" height="1" fill="#909090"/>
<rect x="508" y="604" width="1" height="1" fill="#808080"/>
<rect x="496" y="604" width="1" height="1" fill="#909090"/>
<rect x="485" y="604" width="1" height="1" fill="#808080"/>
<rect x="487" y="604" width="1" height="1" fill="#808080"/>
<rect x="489" y="604" width="1" height="1" fill="#808080"/>
<rect x="491" y="604" width="1" height="1" fill="#808080"/>
<rect x="493" y="604" width="1" height="1" fill="#808080"/>
<rect x="495" y="604" width="1" height="1" fill="#808080"/>
<rect x="497" y="604" width="1" height="1" fill="#808080"/>
<rect x="499" y="604" width="1" height="1" fill="#808080"/>
<rect x="501" y="604" width="1" height="1" fill="#808080"/>
<rect x="503" y="604" width="1" height="1" fill="#808080"/>
<rect x="505" y="604" width="1" height="1" fill="#808080"/>
<rect x="507" y="604" width="1" height="1" fill="#808080"/>
<rect x="509" y="582" width="2" height="18" fill="#ffffff"/>
<rect x="657" y="705" width="13" height="13" fill="url(#chk2)"/>
<rect x="657" y="705" width="1" height="1" fill="#707070"/>
<rect x="657" y="705" width="1" height="1" fill="#707070"/>
<rect x="657" y="717" width="1" height="1" fill="#707070"/>
<rect x="657" y="707" width="1" height="1" fill="#707070"/>
<rect x="659" y="705" width="1" height="1" fill="#707070"/>
<rect x="659" y="717" width="1" height="1" fill="#707070"/>
<rect x="657" y="709" width="1" height="1" fill="#707070"/>
<rect x="661" y="705" width="1" height="1" fill="#707070"/>
<rect x="661" y="717" width="1" height="1" fill="#707070"/>
<rect x="657" y="711" width="1" height="1" fill="#707070"/>
<rect x="663" y="705" width="1" height="1" fill="#707070"/>
<rect x="663" y="717" width="1" height="1" fill="#707070"/>
<rect x="657" y="713" width="1" height="1" fill="#707070"/>
<rect x="665" y="705" width="1" height="1" fill="#707070"/>
<rect x="665" y="717" width="1" height="1" fill="#707070"/>
<rect x="657" y="715" width="1" height="1" fill="#707070"/>
<rect x="667" y="705" width="1" height="1" fill="#707070"/>
<rect x="667" y="717" width="1" height="1" fill="#707070"/>
<rect x="657" y="717" width="1" height="1" fill="#707070"/>
<rect x="669" y="705" width="1" height="1" fill="#707070"/>
<rect x="669" y="717" width="1" height="1" fill="#707070"/>
<path d="M663.5,709 l2.5,2.5 l-2.5,2.5 l-2.5,-2.5 Z" fill="#e8e8e8" stroke="#222" stroke-width="1" shape-rendering="geometricPrecision"/>
<rect x="663" y="711" width="1" height="1" fill="#222"/>
<rect x="671" y="705" width="13" height="13" fill="#808080"/>
<rect x="672" y="706" width="11" height="11" fill="#ffffff"/>
<rect x="673" y="707" width="10" height="10" fill="#888888"/>
<rect x="673" y="707" width="9" height="9" fill="#bcbcbc"/>
<path d="M674,710 l3.5,0 l0,-3 l4.5,4.5 l-4.5,4.5 l0,-3 l-3.5,0 Z" fill="#000000" shape-rendering="geometricPrecision"/>
<rect x="685" y="237" width="40" height="40" fill="#808080"/>
<rect x="686" y="238" width="38" height="38" fill="#ffffff"/>
<rect x="689" y="241" width="32" height="32" fill="#cccccc"/>
<rect x="685" y="238" width="1" height="38" fill="#ffffff"/>
<rect x="688" y="279" width="40" height="40" fill="#808080"/>
<rect x="689" y="280" width="38" height="38" fill="#ffffff"/>
<rect x="692" y="283" width="32" height="32" fill="#cccccc"/>
<rect x="691" y="321" width="40" height="40" fill="#808080"/>
<rect x="692" y="322" width="38" height="38" fill="#ffffff"/>
<rect x="695" y="325" width="32" height="32" fill="#cccccc"/>
<rect x="694" y="363" width="40" height="40" fill="#808080"/>
<rect x="695" y="364" width="38" height="38" fill="#ffffff"/>
<rect x="698" y="367" width="32" height="32" fill="#cccccc"/>
<rect x="697" y="405" width="40" height="40" fill="#808080"/>
<rect x="698" y="406" width="38" height="38" fill="#ffffff"/>
<rect x="701" y="409" width="32" height="32" fill="#cccccc"/>
<rect x="700" y="447" width="40" height="40" fill="#808080"/>
<rect x="701" y="448" width="38" height="38" fill="#ffffff"/>
<rect x="704" y="451" width="32" height="32" fill="#cccccc"/>
<rect x="703" y="489" width="40" height="40" fill="#808080"/>
<rect x="704" y="490" width="38" height="38" fill="#ffffff"/>
<rect x="707" y="493" width="32" height="32" fill="#cccccc"/>
<rect x="65" y="18" width="16" height="15" fill="#000000"/>
<rect x="64" y="19" width="18" height="13" fill="#000000"/>
<rect x="65" y="19" width="16" height="13" fill="#d0d0d0"/>
<rect x="66" y="20" width="14" height="11" fill="#000000"/>
<rect x="67" y="33" width="12" height="2" fill="#000000"/>
<rect x="68" y="33" width="10" height="1" fill="#ffffff"/>
<rect x="286" y="19" width="16" height="16" fill="#6a6a6a"/>
<rect x="285" y="18" width="16" height="16" fill="#ffffff"/>
<rect x="287" y="20" width="12" height="12" fill="#707070"/>
<rect x="288" y="21" width="11" height="11" fill="url(#gv)"/>
<path d="M288,32 L299,21" fill="none" stroke="#2a2a2a" stroke-width="1.5" shape-rendering="geometricPrecision"/>
<rect x="310" y="21" width="5" height="1" fill="#ffffff"/>
<rect x="310" y="21" width="1" height="5" fill="#ffffff"/>
<rect x="309" y="20" width="5" height="1" fill="#5a5a5a"/>
<rect x="309" y="20" width="1" height="5" fill="#5a5a5a"/>
<rect x="317" y="21" width="5" height="1" fill="#ffffff"/>
<rect x="321" y="21" width="1" height="5" fill="#ffffff"/>
<rect x="316" y="20" width="5" height="1" fill="#5a5a5a"/>
<rect x="320" y="20" width="1" height="5" fill="#5a5a5a"/>
<rect x="310" y="32" width="5" height="1" fill="#ffffff"/>
<rect x="310" y="28" width="1" height="5" fill="#ffffff"/>
<rect x="309" y="31" width="5" height="1" fill="#5a5a5a"/>
<rect x="309" y="27" width="1" height="5" fill="#5a5a5a"/>
<rect x="317" y="32" width="5" height="1" fill="#ffffff"/>
<rect x="321" y="28" width="1" height="5" fill="#ffffff"/>
<rect x="316" y="31" width="5" height="1" fill="#5a5a5a"/>
<rect x="320" y="27" width="1" height="5" fill="#5a5a5a"/>
<path d="M35,175.5 L46,175.5 M35.3,175.5 L41,181.5" fill="none" stroke="#ffffff" stroke-width="1.4" shape-rendering="geometricPrecision"/>
<path d="M46.5,176 L41.3,182.3" fill="none" stroke="#222" stroke-width="1.6" shape-rendering="geometricPrecision"/>
<rect x="35" y="184" width="12" height="1" fill="#ffffff"/>
<rect x="36" y="185" width="11" height="1" fill="#222"/>
<rect x="46" y="184" width="1" height="1" fill="#222"/>
<g transform="translate(67,69)" shape-rendering="geometricPrecision">
<path d="M20.2,4 L24.7,4 L25.5,4.9 L21.6,8.5 L23.3,10.3 L27.1,6.6 L27.9,7.5 L27.9,11.7 L25.1,14.4 L21.5,14.4 L14,21.3 L14,25.3 L10.7,28.5 L6.5,28.5 L5.8,27.8 L9.6,24.1 L7.9,22.3 L4.1,26 L3.4,25.3 L3.4,20.9 L6.5,18 L9.7,18 L17.2,10.9 L17.2,7.5 Z" transform="translate(1.4,1.4)" fill="#7a7a7a"/>
<path d="M20.2,4 L24.7,4 L25.5,4.9 L21.6,8.5 L23.3,10.3 L27.1,6.6 L27.9,7.5 L27.9,11.7 L25.1,14.4 L21.5,14.4 L14,21.3 L14,25.3 L10.7,28.5 L6.5,28.5 L5.8,27.8 L9.6,24.1 L7.9,22.3 L4.1,26 L3.4,25.3 L3.4,20.9 L6.5,18 L9.7,18 L17.2,10.9 L17.2,7.5 Z" fill="#fff" stroke="#000" stroke-width="1.1" stroke-linejoin="round"/>
<path d="M20.2,4 L24.7,4 L25.5,4.9 L21.6,8.5 L23.3,10.3 L27.1,6.6 L27.9,7.5 L27.9,11.7 L25.1,14.4 L21.5,14.4 L14,21.3 L14,25.3 L10.7,28.5 L6.5,28.5 L5.8,27.8 L9.6,24.1 L7.9,22.3 L4.1,26 L3.4,25.3 L3.4,20.9 L6.5,18 L9.7,18 L17.2,10.9 L17.2,7.5 Z" fill="url(#dith)" opacity="0.35"/>
</g>
<g transform="translate(104,69.3)" shape-rendering="geometricPrecision">
<path d="M20.2,4 L24.7,4 L25.5,4.9 L21.6,8.5 L23.3,10.3 L27.1,6.6 L27.9,7.5 L27.9,11.7 L25.1,14.4 L21.5,14.4 L14,21.3 L14,25.3 L10.7,28.5 L6.5,28.5 L5.8,27.8 L9.6,24.1 L7.9,22.3 L4.1,26 L3.4,25.3 L3.4,20.9 L6.5,18 L9.7,18 L17.2,10.9 L17.2,7.5 Z" transform="translate(1.4,1.4)" fill="#7a7a7a"/>
<path d="M20.2,4 L24.7,4 L25.5,4.9 L21.6,8.5 L23.3,10.3 L27.1,6.6 L27.9,7.5 L27.9,11.7 L25.1,14.4 L21.5,14.4 L14,21.3 L14,25.3 L10.7,28.5 L6.5,28.5 L5.8,27.8 L9.6,24.1 L7.9,22.3 L4.1,26 L3.4,25.3 L3.4,20.9 L6.5,18 L9.7,18 L17.2,10.9 L17.2,7.5 Z" fill="#fff" stroke="#000" stroke-width="1.1" stroke-linejoin="round"/>
<path d="M20.2,4 L24.7,4 L25.5,4.9 L21.6,8.5 L23.3,10.3 L27.1,6.6 L27.9,7.5 L27.9,11.7 L25.1,14.4 L21.5,14.4 L14,21.3 L14,25.3 L10.7,28.5 L6.5,28.5 L5.8,27.8 L9.6,24.1 L7.9,22.3 L4.1,26 L3.4,25.3 L3.4,20.9 L6.5,18 L9.7,18 L17.2,10.9 L17.2,7.5 Z" fill="url(#dith)" opacity="0.35"/>
</g>
<path d="M111.5,74.5 h5 l3,3 v6 h-8 Z" fill="#ffffff" stroke="#000000" stroke-width="1" shape-rendering="geometricPrecision"/>
<path d="M116.5,74.5 v3 h3" fill="none" stroke="#000000" stroke-width="1" shape-rendering="geometricPrecision"/>
<rect x="108" y="82" width="15" height="6" fill="#000000"/>
<rect x="109" y="83" width="13" height="4" fill="#c6c6c6"/>
<rect x="109" y="83" width="13" height="1" fill="#e8e8e8"/>
<rect x="144" y="72" width="25" height="21" rx="2" fill="#000" shape-rendering="geometricPrecision"/>
<rect x="145" y="73" width="23" height="19" fill="#d8d8d8"/>
<rect x="145" y="90" width="23" height="2" fill="#a0a0a0"/>
<rect x="166" y="73" width="2" height="19" fill="#a0a0a0"/>
<rect x="147" y="75" width="19" height="14" fill="#000000"/>
<rect x="147" y="75" width="19" height="14" fill="#000000"/>
<rect x="163" y="91" width="3" height="1" fill="#ffff00"/>
<rect x="148" y="93" width="17" height="2" fill="#000000"/>
<rect x="149" y="93" width="15" height="1" fill="#ffffff"/>
<rect x="146" y="95" width="21" height="3" fill="#000000"/>
<rect x="147" y="96" width="19" height="1" fill="#ffffff"/>
<rect x="195" y="73" width="2" height="6" fill="#000000"/>
<rect x="201" y="73" width="2" height="6" fill="#000000"/>
<rect x="193" y="79" width="12" height="8" fill="#000000"/>
<rect x="193" y="79" width="3" height="8" fill="#d8d8d8"/>
<rect x="193" y="79" width="1" height="8" fill="#909090"/>
<rect x="193" y="79" width="3" height="1" fill="#909090"/>
<rect x="196" y="79" width="6" height="8" fill="#808080"/>
<path d="M196,87 H204.5 L201,90.5 H196 Z" fill="#000000" shape-rendering="geometricPrecision"/>
<path d="M198.9,90 V94.5 H204.7" fill="none" stroke="#000000" stroke-width="2.3" shape-rendering="geometricPrecision"/>
<rect x="181" y="84" width="14" height="11" rx="1.5" fill="#000" shape-rendering="geometricPrecision"/>
<rect x="182" y="85" width="12" height="9" fill="#909090"/>
<rect x="183" y="86" width="10" height="7" fill="#000000"/>
<rect x="184" y="87" width="8" height="5" fill="#000000"/>
<rect x="183" y="95" width="10" height="3" fill="#000000"/>
<rect x="184" y="96" width="8" height="1" fill="#909090"/>
<path d="M225.8,82.5 V77.6 a4.8,4.8 0 0 1 9.6,0 V82.5" fill="none" stroke="#8a8a8a" stroke-width="3.6" shape-rendering="geometricPrecision"/>
<path d="M225.8,82.5 V77.6 a4.8,4.8 0 0 1 9.6,0 V82.5" fill="none" stroke="#ffffff" stroke-width="2" shape-rendering="geometricPrecision"/>
<rect x="222" y="81" width="17" height="2" fill="#e0e0e0"/>
<rect x="221" y="83" width="19" height="14" fill="#8a8a8a"/>
<rect x="221" y="83" width="17" height="12" fill="#ffffff"/>
<rect x="223" y="85" width="15" height="10" fill="#c6c6c6"/>
<circle cx="230.6" cy="88.6" r="1.9" fill="#fff" shape-rendering="geometricPrecision"/><rect x="229.8" y="89" width="2" height="4.6" fill="#fff"/>
<circle cx="230" cy="88.2" r="1.8" fill="#808080" shape-rendering="geometricPrecision"/><rect x="229.1" y="88.5" width="1.8" height="4.3" fill="#808080"/>
<rect x="256" y="75" width="23" height="20" fill="#000000"/>
<rect x="257" y="76" width="21" height="18" fill="#ffffff"/>
<rect x="259" y="76" width="17" height="2" fill="#000000"/>
<rect x="260" y="76" width="15" height="2" fill="#008000"/>
<rect x="257" y="78" width="21" height="1" fill="#000000"/>
<text x="267.2" y="92.6" font-size="18" fill="#0000ff" font-weight="700" text-anchor="middle" font-family="Liberation Serif,serif" font-style="italic">i</text>
<g transform="translate(304.5,96.9) scale(0.84,1)">
<text x="-1" y="-0.6" font-size="33" fill="#ffffff" font-weight="700" text-anchor="middle">?</text>
<text x="0" y="0" font-size="33" fill="#0000ff" font-weight="700" text-anchor="middle">?</text>
</g>
<rect x="81" y="111" width="14" height="16" rx="1.6" fill="#000" shape-rendering="geometricPrecision"/>
<rect x="82" y="112" width="12" height="14" fill="#ffff00"/>
<path d="M83.5,113.5 h9 v7 l-3.4,3.4 h-5.6 Z" fill="#ffffff" stroke="#000000" stroke-width="1" shape-rendering="geometricPrecision"/>
<circle cx="90.7" cy="121.5" r="1.1" fill="#fff" stroke="#000" stroke-width="0.8" shape-rendering="geometricPrecision"/>
<path d="M84.8,113 L88,108.9 L91.3,113 Z" fill="#ffffff" stroke="#000000" stroke-width="1" shape-rendering="geometricPrecision"/>
<rect x="87" y="110" width="2" height="1" fill="#909090"/>
<rect x="86" y="112" width="4" height="1" fill="#b0b0b0"/>
<path d="M70.5,119.6 v-4.6 q0,-2 2,-2 h3.2 v-2.7 l4.2,4.2 l-4.2,4.2 v-2.5 h-2.7 v3.4 Z" fill="#0000ff" stroke="#000000" stroke-width="1" shape-rendering="geometricPrecision"/>
<rect x="70" y="121" width="14" height="11" rx="1.5" fill="#000" shape-rendering="geometricPrecision"/>
<rect x="71" y="122" width="12" height="9" fill="#808080"/>
<rect x="72" y="123" width="10" height="7" fill="#000000"/>
<rect x="73" y="124" width="8" height="5" fill="#cccccc"/>
<rect x="72" y="132" width="10" height="3" fill="#000000"/>
<rect x="73" y="133" width="8" height="1" fill="#808080"/>
<rect x="118" y="111" width="14" height="16" rx="1.6" fill="#000" shape-rendering="geometricPrecision"/>
<rect x="119" y="112" width="12" height="14" fill="#ffff00"/>
<path d="M120.5,113.5 h9 v7 l-3.4,3.4 h-5.6 Z" fill="#ffffff" stroke="#000000" stroke-width="1" shape-rendering="geometricPrecision"/>
<circle cx="127.7" cy="121.5" r="1.1" fill="#fff" stroke="#000" stroke-width="0.8" shape-rendering="geometricPrecision"/>
<path d="M121.8,113 L125,108.9 L128.3,113 Z" fill="#ffffff" stroke="#000000" stroke-width="1" shape-rendering="geometricPrecision"/>
<rect x="124" y="110" width="2" height="1" fill="#909090"/>
<rect x="123" y="112" width="4" height="1" fill="#b0b0b0"/>
<path d="M107.5,119.6 v-4.6 q0,-2 2,-2 h3.2 v-2.7 l4.2,4.2 l-4.2,4.2 v-2.5 h-2.7 v3.4 Z" fill="#0000ff" stroke="#000000" stroke-width="1" shape-rendering="geometricPrecision"/>
<rect x="107" y="121" width="16" height="13" fill="#000000"/>
<rect x="108" y="122" width="14" height="11" fill="#ffffff"/>
<rect x="110" y="122" width="10" height="2" fill="#000000"/>
<rect x="111" y="122" width="8" height="2" fill="#008000"/>
<rect x="108" y="124" width="14" height="1" fill="#000000"/>
<rect x="155" y="112" width="14" height="16" rx="1.6" fill="#000" shape-rendering="geometricPrecision"/>
<rect x="156" y="113" width="12" height="14" fill="#ffff00"/>
<path d="M157.5,114.5 h9 v7 l-3.4,3.4 h-5.6 Z" fill="#ffffff" stroke="#000000" stroke-width="1" shape-rendering="geometricPrecision"/>
<circle cx="164.7" cy="122.5" r="1.1" fill="#fff" stroke="#000" stroke-width="0.8" shape-rendering="geometricPrecision"/>
<path d="M158.8,114 L162,109.9 L165.3,114 Z" fill="#ffffff" stroke="#000000" stroke-width="1" shape-rendering="geometricPrecision"/>
<rect x="161" y="111" width="2" height="1" fill="#909090"/>
<rect x="160" y="113" width="4" height="1" fill="#b0b0b0"/>
<path d="M144.5,120.6 v-4.6 q0,-2 2,-2 h3.2 v-2.7 l4.2,4.2 l-4.2,4.2 v-2.5 h-2.7 v3.4 Z" fill="#0000ff" stroke="#000000" stroke-width="1" shape-rendering="geometricPrecision"/>
<rect x="144" y="122" width="16" height="12" fill="#000000"/>
<rect x="144" y="123" width="15" height="9" fill="#ffffff"/>
<rect x="145" y="124" width="14" height="8" fill="#cccccc"/>
<text x="151.7" y="130" font-size="8.6" fill="#000000" textLength="9.5" lengthAdjust="spacingAndGlyphs" text-anchor="middle">OK</text>
<rect x="147" y="131" width="4" height="1" fill="#000000"/>
<rect x="192" y="111" width="14" height="16" rx="1.6" fill="#000" shape-rendering="geometricPrecision"/>
<rect x="193" y="112" width="12" height="14" fill="#ffff00"/>
<path d="M194.5,113.5 h9 v7 l-3.4,3.4 h-5.6 Z" fill="#ffffff" stroke="#000000" stroke-width="1" shape-rendering="geometricPrecision"/>
<circle cx="201.7" cy="121.5" r="1.1" fill="#fff" stroke="#000" stroke-width="0.8" shape-rendering="geometricPrecision"/>
<path d="M195.8,113 L199,108.9 L202.3,113 Z" fill="#ffffff" stroke="#000000" stroke-width="1" shape-rendering="geometricPrecision"/>
<rect x="198" y="110" width="2" height="1" fill="#909090"/>
<rect x="197" y="112" width="4" height="1" fill="#b0b0b0"/>
<path d="M181.5,119.6 v-4.6 q0,-2 2,-2 h3.2 v-2.7 l4.2,4.2 l-4.2,4.2 v-2.5 h-2.7 v3.4 Z" fill="#0000ff" stroke="#000000" stroke-width="1" shape-rendering="geometricPrecision"/>
<rect x="181.5" y="121.5" width="16" height="10" fill="none" stroke="#ff0000" stroke-width="1" stroke-dasharray="1 1"/>
<rect x="198" y="133" width="3" height="1" fill="#000000"/>
<rect x="198" y="133" width="1" height="3" fill="#000000"/>
<rect x="199" y="134" width="1" height="1" fill="#000000"/>
<rect x="219" y="112" width="22" height="22" rx="2.2" fill="#000" shape-rendering="geometricPrecision"/>
<rect x="220" y="113" width="20" height="20" fill="#ffff00"/>
<path d="M222.5,115.5 H237.5 V123.5 L230.5,130.5 H222.5 Z" fill="#ffffff" stroke="#000000" stroke-width="1.1" shape-rendering="geometricPrecision"/>
<path d="M230.2,123.5 H237.5 L230.6,130.3 Z" fill="#ffffff" stroke="#000000" stroke-width="1.1" shape-rendering="geometricPrecision" stroke-linejoin="round"/>
<path d="M224.5,115.5 L227,112 L227.3,109.2 H232.7 L233,112 L235.5,115.5 Z" fill="url(#gclip)" shape-rendering="geometricPrecision"/>
<path d="M224.5,115.5 L227,112 L227.3,109.2 M232.7,109.2 L233,112 L235.5,115.5 M224,115.5 H236" fill="none" stroke="#000000" stroke-width="1.1" shape-rendering="geometricPrecision"/>
<rect x="229" y="110" width="2" height="2" fill="#000000"/>
<g shape-rendering="geometricPrecision">
<circle cx="259.8" cy="114.7" r="3.4" fill="#808000" stroke="#000" stroke-width="0.9"/><circle cx="274" cy="114.7" r="3.4" fill="#808000" stroke="#000" stroke-width="0.9"/>
<path d="M266.5,110.5 v4.5 M265,110.6 h3.2" stroke="#000" stroke-width="1.5"/>
<path d="M256.5,133.5 l4,-4 M276.2,133.5 l-4,-4" stroke="#000" stroke-width="1.4"/>
<circle cx="268" cy="124.3" r="9.2" fill="#ff0000"/>
<circle cx="265.8" cy="125.2" r="8.3" fill="#fff" stroke="#000" stroke-width="1" stroke-dasharray="1.3 0.9"/>
<circle cx="265.8" cy="125.2" r="6.3" fill="none" stroke="#000" stroke-width="1.1" stroke-dasharray="1 2.3"/>
<path d="M265.5,119 L265.9,125.6 L269.6,130.3" fill="none" stroke="#000" stroke-width="1.4"/>
</g>
<rect x="292" y="109" width="26" height="26" fill="#b0b0b0"/>
<rect x="292" y="109" width="25" height="25" fill="#6e6e6e"/>
<rect x="294" y="111" width="22" height="21" fill="#000000"/>
<rect x="300.0" y="115" width="3" height="17" fill="#ffffff"/>
<rect x="301.0" y="113" width="1" height="2" fill="#ffffff"/>
<rect x="300.0" y="114" width="3" height="2" fill="#ff0000"/>
<rect x="301.0" y="113" width="1" height="1" fill="#ffffff"/>
<rect x="299.0" y="121" width="5" height="11" fill="#c0c0c0"/>
<rect x="300.0" y="116" width="3" height="16" fill="#ffffff"/>
<rect x="297.0" y="126" width="2" height="6" fill="#ffffff"/>
<rect x="304.0" y="126" width="2" height="6" fill="#ffffff"/>
<rect x="296.0" y="128" width="1" height="4" fill="#ff0000"/>
<rect x="306.0" y="128" width="1" height="4" fill="#ff0000"/>
<rect x="296.0" y="131" width="1" height="1" fill="#ff00ff"/>
<rect x="306.0" y="131" width="1" height="1" fill="#ff00ff"/>
<rect x="301.0" y="131" width="1" height="1" fill="#666"/>
<rect x="304" y="121" width="8" height="1" fill="#c8c800"/>
<rect x="309" y="120" width="1" height="1" fill="#ffffff"/>
<rect x="308" y="122" width="3" height="1" fill="#ffff00"/>
<rect x="308" y="124" width="3" height="1" fill="#ffff00"/>
<rect x="308" y="126" width="3" height="1" fill="#ffff00"/>
<rect x="308" y="128" width="3" height="1" fill="#ffff00"/>
<rect x="308" y="130" width="3" height="1" fill="#ffff00"/>
<rect x="308" y="132" width="3" height="1" fill="#ffff00"/>
<rect x="310" y="121" width="1" height="11" fill="#a0a000"/>
<g shape-rendering="geometricPrecision">
<circle cx="709.2" cy="254" r="7.6" fill="#f6f6f6" stroke="#000" stroke-width="1.3"/>
<circle cx="709.2" cy="254" r="7" fill="url(#dith)" opacity="0.45"/>
<path d="M705,250.5 l3,2.3" stroke="#00e000" stroke-width="2.2"/><path d="M704.2,252 l3,1.6" stroke="#ff3030" stroke-width="1.2"/><path d="M706.5,249 l2.3,2.8" stroke="#ff40ff" stroke-width="1.2"/><path d="M705.7,251.3 l2,1.5" stroke="#ffff00" stroke-width="1"/>
<path d="M710.5,255.5 l3,2.3" stroke="#00e000" stroke-width="2.2"/><path d="M711.5,254.5 l3,1.6" stroke="#ff3030" stroke-width="1.2"/><path d="M709.6,256.6 l2.3,2.8" stroke="#ff40ff" stroke-width="1.2"/><path d="M711,257.5 l2,1.5" stroke="#00c0ff" stroke-width="1"/>
<circle cx="709.2" cy="254" r="1.7" fill="#fff" stroke="#000" stroke-width="0.9"/>
<path d="M698.5,254 V246 q0.5,2.5 2.6,4 q0.6,1.5 -0.2,3" fill="none" stroke="#000080" stroke-width="1.3"/>
<ellipse cx="697.2" cy="254.2" rx="1.9" ry="1.4" fill="#000080"/>
</g>
<path d="M694.90,257.60 L702.10,257.60 M695.95,255.05 L701.05,260.15 M698.50,254.00 L698.50,261.20 M701.05,255.05 L695.95,260.15 " stroke="#00ff00" stroke-width="1" fill="none" shape-rendering="geometricPrecision"/>
<circle cx="698.5" cy="257.6" r="1.30" fill="#00ff00" shape-rendering="geometricPrecision"/>
<path d="M691.70,263.50 L700.90,263.50 M693.05,260.25 L699.55,266.75 M696.30,258.90 L696.30,268.10 M699.55,260.25 L693.05,266.75 " stroke="#ffff00" stroke-width="1" fill="none" shape-rendering="geometricPrecision"/>
<circle cx="696.3" cy="263.5" r="1.66" fill="#ffff00" shape-rendering="geometricPrecision"/>
<path d="M700.90,264.50 L708.10,264.50 M701.95,261.95 L707.05,267.05 M704.50,260.90 L704.50,268.10 M707.05,261.95 L701.95,267.05 " stroke="#ff0000" stroke-width="1" fill="none" shape-rendering="geometricPrecision"/>
<circle cx="704.5" cy="264.5" r="1.30" fill="#ff0000" shape-rendering="geometricPrecision"/>
<rect x="696" y="288" width="24" height="23" fill="#808080"/>
<rect x="697" y="289" width="22" height="21" fill="#000000"/>
<rect x="703.0" y="293" width="3" height="17" fill="#ffffff"/>
<rect x="704.0" y="291" width="1" height="2" fill="#ffffff"/>
<rect x="703.0" y="292" width="3" height="2" fill="#ff0000"/>
<rect x="704.0" y="291" width="1" height="1" fill="#ffffff"/>
<rect x="702.0" y="299" width="5" height="11" fill="#c0c0c0"/>
<rect x="703.0" y="294" width="3" height="16" fill="#ffffff"/>
<rect x="700.0" y="304" width="2" height="6" fill="#ffffff"/>
<rect x="707.0" y="304" width="2" height="6" fill="#ffffff"/>
<rect x="699.0" y="306" width="1" height="4" fill="#ff0000"/>
<rect x="709.0" y="306" width="1" height="4" fill="#ff0000"/>
<rect x="699.0" y="309" width="1" height="1" fill="#ff00ff"/>
<rect x="709.0" y="309" width="1" height="1" fill="#ff00ff"/>
<rect x="704.0" y="309" width="1" height="1" fill="#666"/>
<rect x="709" y="297" width="9" height="1" fill="#909090"/>
<rect x="709" y="299" width="9" height="1" fill="#909090"/>
<rect x="709" y="302" width="9" height="1" fill="#909090"/>
<g shape-rendering="geometricPrecision"><path d="M711.5,297.5 V291 q0.5,2 2.6,3" fill="none" stroke="#00ff00" stroke-width="1.2"/><ellipse cx="710.5" cy="297.8" rx="1.5" ry="1.1" fill="#00ff00"/>
<path d="M715.5,300.5 V294 q0.5,2 2.4,3" fill="none" stroke="#ff0000" stroke-width="1.2"/><ellipse cx="714.5" cy="300.8" rx="1.5" ry="1.1" fill="#ff0000"/></g>
<g shape-rendering="geometricPrecision"><circle cx="710.5" cy="341.5" r="8.8" fill="#fff" stroke="#808080" stroke-width="1" stroke-dasharray="1.2 1"/>
<path d="M710.5,332.9 l1.6,1.6 l-1.6,1.6 l-1.6,-1.6 Z" fill="#008080"/>
<path d="M717.5,339.9 l1.6,1.6 l-1.6,1.6 l-1.6,-1.6 Z" fill="#008080"/>
<path d="M710.5,346.9 l1.6,1.6 l-1.6,1.6 l-1.6,-1.6 Z" fill="#008080"/>
<path d="M703.5,339.9 l1.6,1.6 l-1.6,1.6 l-1.6,-1.6 Z" fill="#008080"/>
<path d="M714.5,336.5 L709.3,341.8 L712.7,345.1" fill="none" stroke="#000080" stroke-width="1.7"/></g>
<rect x="710" y="371" width="17" height="1" fill="#000000"/>
<rect x="725" y="371" width="2" height="19" fill="#000000"/>
<rect x="710" y="374" width="14" height="1" fill="#808080"/>
<rect x="723" y="374" width="1" height="16" fill="#808080"/>
<g shape-rendering="geometricPrecision"><path d="M702.5,392.7 L719.5,377.5" stroke="#909090" stroke-width="3.2" stroke-linecap="round"/>
<path d="M702.5,392.7 L719,378" stroke="#f4f4f4" stroke-width="2" stroke-linecap="round"/>
<path d="M703,392.2 L707,388.6" stroke="#0000ff" stroke-width="1.2"/><path d="M707,388.6 L713,383.3" stroke="#ff0000" stroke-width="1.2"/></g>
<path d="M705.5,418.5 h6.5 l1.5,2 h16 v5.5 h-2 v-1.5 h-2 v1.5 h-2.5 v-1.5 h-2.5 v2 h-2 v1.5 h-2 v1.5 h-2 v2 h-9 q-1,0 -1,-1 v-11 q0,-1 1,-1 Z" fill="#ffff00" stroke="#000000" stroke-width="1" shape-rendering="geometricPrecision"/>
<rect x="707" y="422" width="2" height="3" fill="#000000"/>
<rect x="716" y="455" width="2" height="7" fill="#000000"/>
<rect x="722" y="455" width="2" height="7" fill="#000000"/>
<rect x="714" y="461" width="13" height="9" fill="#000000"/>
<rect x="714" y="462" width="4" height="7" fill="#d0d0d0"/>
<rect x="718" y="461" width="5" height="9" fill="#808080"/>
<rect x="714" y="461" width="1" height="1" fill="#cccccc"/>
<rect x="714" y="469" width="1" height="1" fill="#cccccc"/>
<path d="M716,470 h10 l-3,3 h-4 Z" fill="#000000"/>
<path d="M720.5,472 v5 h5.5" fill="none" stroke="#000000" stroke-width="3"/>
<g shape-rendering="geometricPrecision">
<rect x="709" y="502" width="28" height="17" rx="2" fill="#000"/>
<rect x="710" y="501" width="4" height="2" fill="#000000"/>
<rect x="715" y="501" width="1" height="2" fill="#000000"/>
<rect x="729" y="501" width="5" height="2" fill="#000000"/>
<path d="M718,504 l3.5,-4.5 h4 l3.5,4.5" fill="none" stroke="#000" stroke-width="1.2"/>
<rect x="710" y="505" width="26" height="1" fill="#e8e8e8"/>
<circle cx="723.2" cy="512" r="4.4" fill="#000" stroke="#d8d8d8" stroke-width="0.9"/>
<ellipse cx="723.2" cy="512" rx="2.4" ry="2.1" fill="#fff"/>
<rect x="713" y="510" width="2" height="3" fill="#e8e8e8"/>
</g>
</svg>
</body></html>
